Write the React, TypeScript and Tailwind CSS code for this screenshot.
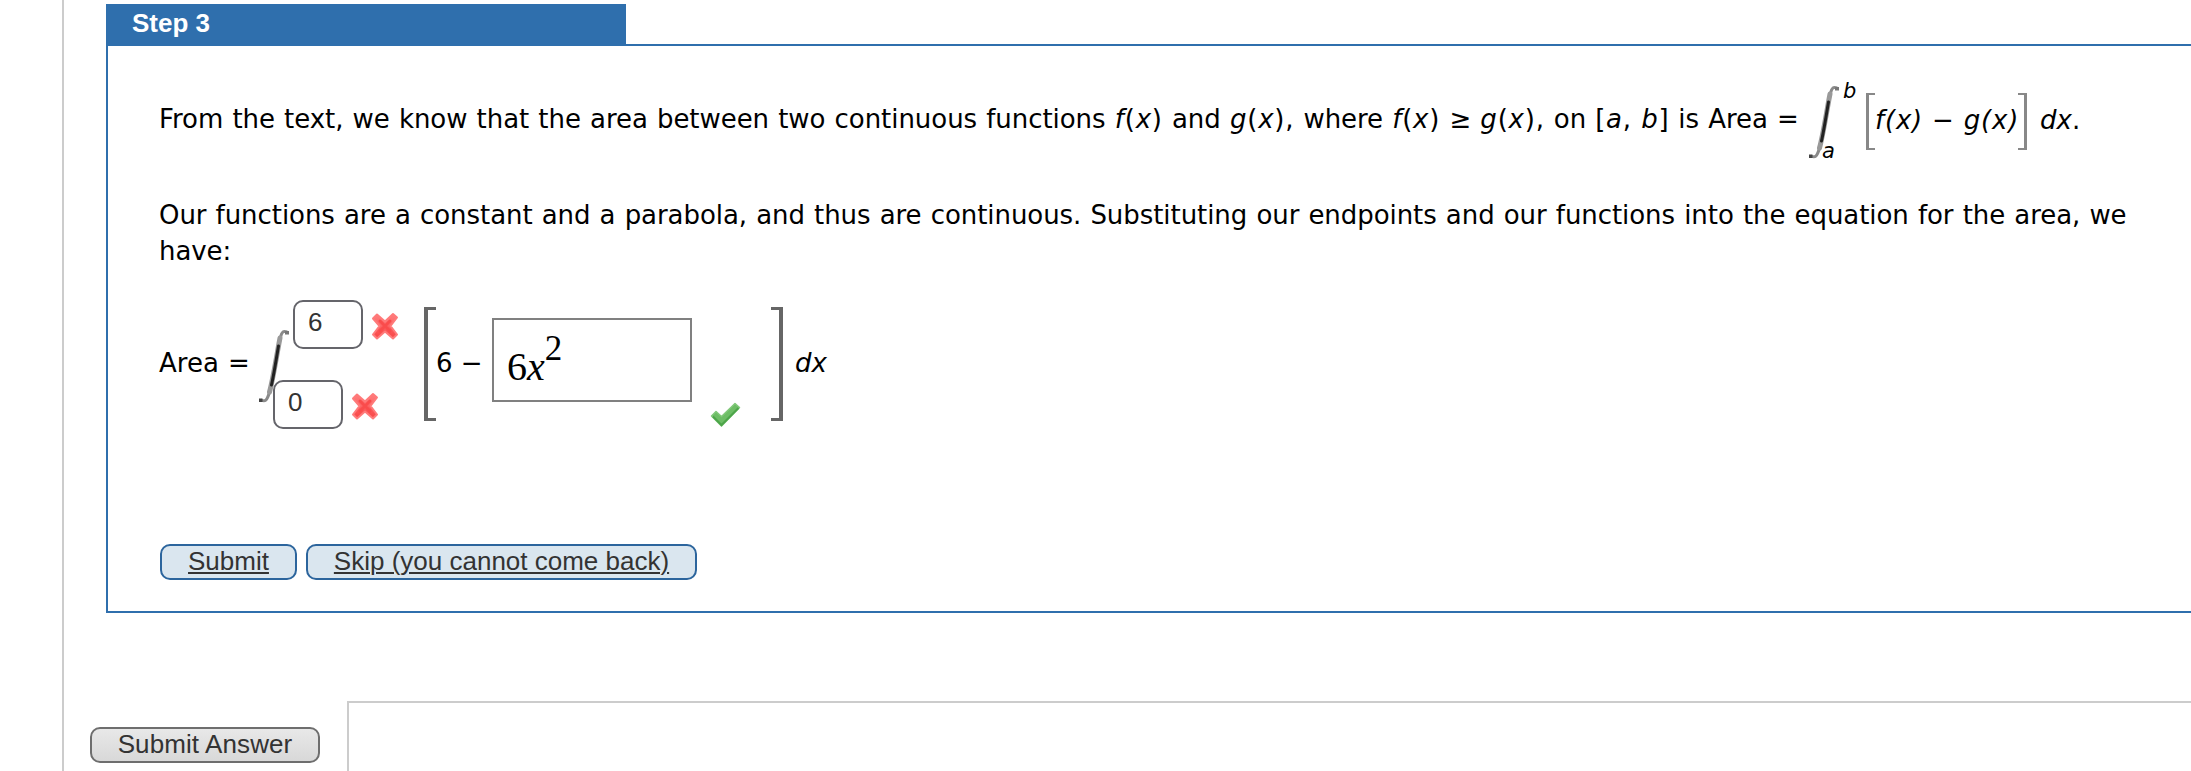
import { ReactNode } from "react";

function WrongMark() {
  return (
    <svg width="28" height="28" viewBox="0 0 28 28" className="block shrink-0">
      <defs>
        <linearGradient id="wrong" x1="0" y1="0" x2="0" y2="1">
          <stop offset="0" stopColor="#ff8080" />
          <stop offset="1" stopColor="#f94444" />
        </linearGradient>
      </defs>
      <path
        d="M6 2.5 L14 9.5 L22 2 L26 5.5 L19.5 14 L26 22.5 L22 26.5 L14 19.5 L6 26.5 L2 22.5 L8.5 14 L2 6.5 Z"
        fill="url(#wrong)"
        stroke="#ff7a7a"
        strokeWidth="2"
        strokeLinejoin="round"
      />
      <path d="M9 9 L19 19 M19 9 L9 19" stroke="#fa4c4c" strokeWidth="3" strokeLinecap="round" />
    </svg>
  );
}

function CorrectMark() {
  return (
    <svg width="32" height="26" viewBox="0 0 32 26" className="block shrink-0">
      <path d="M1.5 14 L6 9.5 L11.5 14.5 L25 1.5 L29.5 5.5 L11.5 24 Z" fill="#6dbd65" stroke="#80c879" strokeWidth="1.5" strokeLinejoin="round" />
      <path d="M3 14.5 L11.5 23 L28.5 6" fill="none" stroke="#4da54a" strokeWidth="2" />
    </svg>
  );
}

function Integral() {
  return (
    <svg width="30" height="74" viewBox="0 0 30 74" className="block shrink-0">
      <path d="M28 3 C24.5 1.5 23 2.5 21.5 8 C18.5 22 14.5 50 10.5 63 C8 72 6 73 2 71" fill="none" stroke="#8a8a8a" strokeWidth="3" />
      <path d="M21 9 C18 24 14.5 48 10.5 63" fill="none" stroke="#999" strokeWidth="5" strokeLinecap="round" />
      <path d="M19.5 17 C17.5 29 15 45 12.5 56" fill="none" stroke="#222" strokeWidth="3" strokeLinecap="round" />
      <rect x="26" y="2" width="4" height="3.5" fill="#777" />
      <rect x="0" y="69.5" width="3.5" height="3.5" fill="#444" />
    </svg>
  );
}

function MathInput({ children }: { children: ReactNode }) {
  return (
    <div className="flex h-[49px] w-[70px] shrink-0 items-center rounded-[10px] border-2 border-[#65656b] pb-[5px] pl-[13px] font-['Liberation_Sans',sans-serif] text-[26px] text-[#333]">
      {children}
    </div>
  );
}

// f(x), g(x): slightly looser tracking than the surrounding prose
function Fn({ name }: { name: string }) {
  return (
    <span className="tracking-[0.8px]">
      <i>{name}</i>(<i>x</i>)
    </span>
  );
}

export default function App() {
  return (
    <div className="h-[771px] w-full overflow-hidden bg-white pl-[62px] text-black">
      <div className="flex h-full flex-col border-l-2 border-[#ccc] pt-1 font-['DejaVu_Sans',sans-serif] text-[26px]">
        {/* Step tab */}
        <div className="ml-[42px] flex h-10 w-[520px] shrink-0 items-center bg-[#2f6fad] pl-[26px] font-['Liberation_Sans',sans-serif] font-bold text-white">
          <span className="-mt-px">Step 3</span>
        </div>

        {/* Step body */}
        <div className="ml-[42px] h-[569px] shrink-0 border-y-2 border-l-2 border-[#2f6fad] pl-[51px]">
          <div className="flex h-[146px] items-start whitespace-nowrap">
            <p className="w-[1650px] shrink-0 pt-[55px] leading-9 tracking-[-0.05px] [word-spacing:0.95px]">
              From the text, we know that the area between two continuous functions <Fn name="f" /> and <Fn name="g" />
              <span className="tracking-[0.7px]">,</span> where <Fn name="f" /> ≥ <Fn name="g" />
              <span className="tracking-[0.7px]">,</span> on <span className="tracking-[0.6px]">[<i>a</i>, <i>b</i>]</span> is Area =
            </p>
            <div className="flex h-[90px] pt-[32px] text-[21px] italic leading-6">
              <div className="pt-[7px]">
                <Integral />
              </div>
              <div className="-ml-[17px] flex h-[85px] w-[44px] flex-col justify-between pt-px">
                <span className="pl-[21px]">b</span>
                <span>a</span>
              </div>
            </div>
            <div className="mt-[47px] h-[57px] w-[9px] border-y-2 border-l-[3px] border-[#888]" />
            <p className="w-[143px] pt-[56px] leading-9 tracking-[0.8px]">
              <i>f(x)</i> − <i>g(x)</i>
            </p>
            <div className="mt-[47px] h-[57px] w-[9px] border-y-2 border-r-[3px] border-[#888]" />
            <p className="pl-[13px] pt-[56px] leading-9">
              <i>dx</i>.
            </p>
          </div>

          <p className="h-[108px] w-[2020px] pt-[5px] leading-9 tracking-[-0.06px] [word-spacing:0.95px]">
            Our functions are a constant and a parabola, and thus are continuous. Substituting our endpoints and our functions into the equation for the area, we
            <br />
            have:
          </p>

          <div className="flex h-[129px] items-start leading-9">
            <span className="w-[100px] shrink-0 pt-[45px] whitespace-nowrap [word-spacing:1px]">Area =</span>
            <div className="pt-[29px]">
              <Integral />
            </div>
            <div className="-ml-4 flex w-[151px] shrink-0 flex-col gap-[31px]">
              <div className="flex items-center gap-2 pl-5">
                <MathInput>6</MathInput>
                <div className="pt-[3px]">
                  <WrongMark />
                </div>
              </div>
              <div className="flex items-center gap-2">
                <MathInput>0</MathInput>
                <div className="pt-[3px]">
                  <WrongMark />
                </div>
              </div>
            </div>
            <div className="mt-[7px] h-[114px] w-3 shrink-0 border-y-[3px] border-l-4 border-[#666]" />
            <span className="w-[56px] shrink-0 pt-[45px] whitespace-nowrap">6 −</span>
            <div className="mt-[18px] flex h-[84px] w-[200px] shrink-0 items-start border-2 border-[#808080] pl-[13px] font-['Liberation_Serif',serif]">
              <span className="pt-[27px] text-[40px] leading-[40px]">6<i>x</i></span>
              <span className="pt-[11px] text-[35px] leading-[35px]">2</span>
            </div>
            <div className="w-[79px] shrink-0 pl-[18px] pt-[102px]">
              <CorrectMark />
            </div>
            <div className="mt-[7px] h-[114px] w-3 shrink-0 border-y-[3px] border-r-4 border-[#666]" />
            <span className="pl-3 pt-[45px] italic">dx</span>
          </div>

          <div className="ml-px mt-[115px] flex gap-[9px] font-['Liberation_Sans',sans-serif] text-[#333]">
            <button className="h-9 w-[137px] rounded-[10px] border-2 border-[#2c659d] bg-[#dae6ef] pb-0.5 leading-[30px] underline decoration-2 underline-offset-2">Submit</button>
            <button className="h-9 w-[391px] rounded-[10px] border-2 border-[#2c659d] bg-[#dae6ef] pb-0.5 leading-[30px] underline decoration-2 underline-offset-2">
              Skip (you cannot come back)
            </button>
          </div>
        </div>

        {/* Footer */}
        <div className="flex pt-[88px]">
          <div className="w-[283px] shrink-0 pl-[26px] pt-[24px]">
            <button className="h-9 w-[230px] rounded-[10px] border-2 border-[#6e6e6e] bg-linear-to-b from-[#e8e8e8] to-[#d8d8d8] pb-0.5 font-['Liberation_Sans',sans-serif] leading-[30px] tracking-[0.1px] text-[#333]">
              Submit Answer
            </button>
          </div>
          <div className="h-20 grow border-l-2 border-t-2 border-[#ccc]" />
        </div>
      </div>
    </div>
  );
}
